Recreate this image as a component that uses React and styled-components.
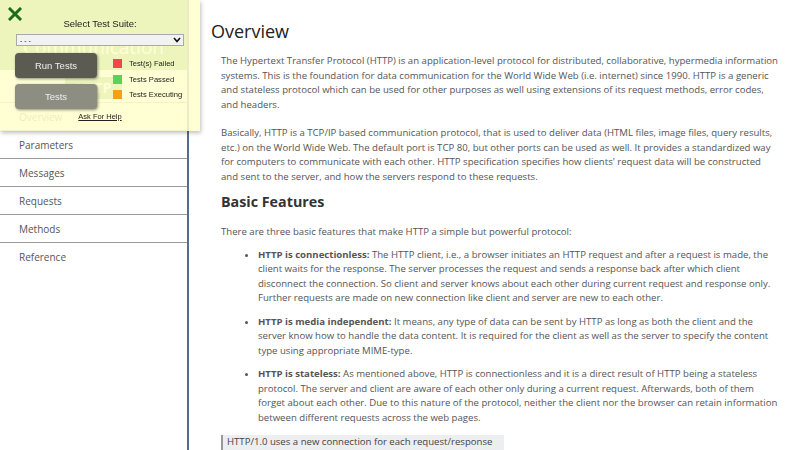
import React from 'react'
import styled, { createGlobalStyle } from 'styled-components'

const GlobalStyle = createGlobalStyle`
  html, body {
    margin: 0;
    padding: 0;
    background: #fff;
  }
  body {
    font-family: 'Open Sans', 'DejaVu Sans', sans-serif;
  }
`

const Page = styled.div`
  display: flex;
  height: 100vh;
  overflow: hidden;
`

const Sidebar = styled.nav`
  width: 187px;
  flex-shrink: 0;
  border-right: 2px solid #566b90;
  display: flex;
  flex-direction: column;
`

const Brand = styled.div`
  height: 70px;
  background: #6aa84f;
  color: #fff;
  font-size: 19px;
  display: flex;
  align-items: flex-end;
  justify-content: center;
  padding-bottom: 10px;
  box-sizing: border-box;
`

const BadgeRow = styled.div`
  height: 33px;
  display: flex;
  justify-content: center;
  align-items: flex-start;
  padding-top: 7px;
  box-sizing: border-box;
  border-bottom: 1px solid #999;
`

const Badge = styled.span`
  background: #6aa84f;
  color: #fff;
  font-weight: 700;
  font-size: 14px;
  line-height: 20px;
  padding: 1px 11px;
`

const MenuItem = styled.a`
  display: flex;
  align-items: center;
  height: 28px;
  padding-left: 19px;
  font-size: 10px;
  color: #555;
  text-decoration: none;
  border-bottom: ${p => (p.last ? 'none' : '1px solid #999')};
  box-sizing: border-box;
`

const Main = styled.main`
  flex: 1;
  padding: 19px 21px 0 22px;
  color: #555;
  font-size: 9.6px;
  line-height: 14.5px;
`

const Title = styled.h1`
  margin: 0 0 11px;
  font-size: 18px;
  font-weight: 400;
  line-height: 24px;
  color: #222;
`

const Section = styled.div`
  margin-left: 10px;
`

const Para = styled.p`
  margin: 0 0 ${p => p.gap ?? 14}px;
`

const SubTitle = styled.h2`
  margin: 0 0 13px;
  font-size: 14.3px;
  font-weight: 700;
  line-height: 20px;
  color: #333;
`

const List = styled.ul`
  margin: 0 0 10px;
  padding-left: 37px;
`

const Item = styled.li`
  margin-bottom: 9px;
`

const Code = styled.div`
  display: inline-block;
  background: #eceeef;
  border-left: 2px solid #999;
  padding: 0 12px 0 4px;
  color: #444;
`

/* test runner overlay */
const Runner = styled.div`
  position: fixed;
  top: 0;
  left: 0;
  width: 200px;
  height: 131px;
  background: rgba(255, 255, 205, 0.88);
  box-shadow: 1px 2px 4px rgba(0, 0, 0, 0.25);
  font-family: 'Liberation Sans', Arial, sans-serif;
  color: #222;
  box-sizing: border-box;
  padding: 0 15px;
`

const Close = styled.svg`
  position: absolute;
  top: 7px;
  left: 8px;
`

const SuiteLabel = styled.div`
  text-align: center;
  font-size: 9.5px;
  padding-top: 18px;
  height: 34px;
  box-sizing: border-box;
`

const Select = styled.div`
  display: flex;
  align-items: center;
  justify-content: space-between;
  height: 10px;
  margin: 0 1px 7px;
  border: 1px solid #aaa;
  background: #f2f2ee;
  font-size: 7px;
  padding: 0 2px 0 3px;
`

const Controls = styled.div`
  display: flex;
  justify-content: space-between;
`

const Buttons = styled.div`
  display: flex;
  flex-direction: column;
  gap: 6px;
`

const Button = styled.div`
  width: 82px;
  height: 25px;
  display: flex;
  align-items: center;
  justify-content: center;
  border-radius: 4px;
  background: ${p => (p.muted ? '#8e8d82' : '#5c5b51')};
  color: #eee;
  font-size: 9.5px;
  box-shadow: 1px 1px 3px rgba(0, 0, 0, 0.45);
`

const Legend = styled.div`
  display: flex;
  flex-direction: column;
  gap: 6.5px;
  padding-top: 6px;
  width: 72px;
`

const LegendRow = styled.div`
  display: flex;
  align-items: center;
  gap: 7px;
  font-size: 7.6px;
  white-space: nowrap;
`

const Swatch = styled.span`
  width: 9px;
  height: 9px;
  flex-shrink: 0;
  background: ${p => p.color};
`

const Help = styled.a`
  display: block;
  text-align: center;
  margin-top: 3px;
  font-size: 7.5px;
  color: #222;
  text-decoration: underline;
`

const menu = ['Overview', 'Parameters', 'Messages', 'Requests', 'Methods', 'Reference']

export default function App() {
  return (
    <>
      <GlobalStyle />
      <Page>
        <Sidebar>
          <Brand>Communication</Brand>
          <BadgeRow>
            <Badge>HTTP</Badge>
          </BadgeRow>
          {menu.map((m, i) => (
            <MenuItem key={m} last={i === menu.length - 1}>{m}</MenuItem>
          ))}
        </Sidebar>
        <Main>
          <Title>Overview</Title>
          <Section>
            <Para>
              The Hypertext Transfer Protocol (HTTP) is an application-level protocol for distributed, collaborative, hypermedia information systems. This is the foundation for data communication for the World Wide Web (i.e. internet) since 1990. HTTP is a generic and stateless protocol which can be used for other purposes as well using extensions of its request methods, error codes, and headers.
            </Para>
            <Para gap={8}>
              Basically, HTTP is a TCP/IP based communication protocol, that is used to deliver data (HTML files, image files, query results, etc.) on the World Wide Web. The default port is TCP 80, but other ports can be used as well. It provides a standardized way for computers to communicate with each other. HTTP specification specifies how clients' request data will be constructed and sent to the server, and how the servers respond to these requests.
            </Para>
            <SubTitle>Basic Features</SubTitle>
            <Para gap={8}>There are three basic features that make HTTP a simple but powerful protocol:</Para>
            <List>
              <Item>
                <b>HTTP is connectionless:</b> The HTTP client, i.e., a browser initiates an HTTP request and after a request is made, the client waits for the response. The server processes the request and sends a response back after which client disconnect the connection. So client and server knows about each other during current request and response only. Further requests are made on new connection like client and server are new to each other.
              </Item>
              <Item>
                <b>HTTP is media independent:</b> It means, any type of data can be sent by HTTP as long as both the client and the server know how to handle the data content. It is required for the client as well as the server to specify the content type using appropriate MIME-type.
              </Item>
              <Item>
                <b>HTTP is stateless:</b> As mentioned above, HTTP is connectionless and it is a direct result of HTTP being a stateless protocol. The server and client are aware of each other only during a current request. Afterwards, both of them forget about each other. Due to this nature of the protocol, neither the client nor the browser can retain information between different requests across the web pages.
              </Item>
            </List>
            <Code>HTTP/1.0 uses a new connection for each request/response</Code>
          </Section>
        </Main>
      </Page>

      <Runner>
        <Close width="14" height="14" viewBox="0 0 14 14">
          <path d="M2 2 L12 12 M12 2 L2 12" stroke="#1d6b1d" strokeWidth="3" strokeLinecap="square" />
        </Close>
        <SuiteLabel>Select Test Suite:</SuiteLabel>
        <Select>
          <span>- - -</span>
          <svg width="8" height="6" viewBox="0 0 8 6">
            <path d="M1 1 L4 4.5 L7 1" stroke="#111" strokeWidth="1.6" fill="none" />
          </svg>
        </Select>
        <Controls>
          <Buttons>
            <Button>Run Tests</Button>
            <Button muted>Tests</Button>
          </Buttons>
          <Legend>
            <LegendRow><Swatch color="#f04848" />Test(s) Failed</LegendRow>
            <LegendRow><Swatch color="#5ad25a" />Tests Passed</LegendRow>
            <LegendRow><Swatch color="#f5a019" />Tests Executing</LegendRow>
          </Legend>
        </Controls>
        <Help>Ask For Help</Help>
      </Runner>
    </>
  )
}
